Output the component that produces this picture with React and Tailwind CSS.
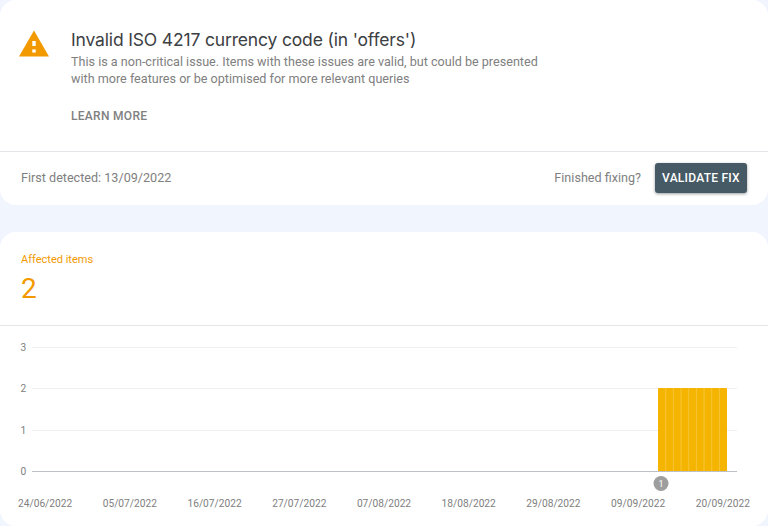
import React from "react";

const dates = ["24/06/2022", "05/07/2022", "16/07/2022", "27/07/2022", "07/08/2022", "18/08/2022", "29/08/2022", "09/09/2022", "20/09/2022"];
const gridLines = [
  { label: "3", y: 21 },
  { label: "2", y: 62 },
  { label: "1", y: 104 },
];

function WarningIcon() {
  return (
    <svg width="30" height="27" viewBox="0 0 30 27" className="shrink-0">
      <path d="M15 0.5 L30 26.5 H0 Z" fill="#f29900" />
      <rect x="13.3" y="11" width="3.4" height="5" fill="#fff" />
      <rect x="13.3" y="19.4" width="3.4" height="3.2" fill="#fff" />
    </svg>
  );
}

function Chart() {
  return (
    <svg width="768" height="168" viewBox="0 0 768 168" className="block" style={{ fontFamily: "Roboto, sans-serif" }}>
      {gridLines.map((g) => (
        <g key={g.label}>
          <text x="20.5" y={g.y + 3.5} fontSize="10.2" fill="#808080">{g.label}</text>
          <line x1="32" x2="737" y1={g.y + 0.5} y2={g.y + 0.5} stroke="#eeeff1" />
        </g>
      ))}
      <path d="M658 145 V63 a1 1 0 0 1 1 -1 H726 a1 1 0 0 1 1 1 V145 Z" fill="#f4b400" />
      {Array.from({ length: 8 }).map((_, i) => (
        <line key={i} x1={665.7 + i * 7.67} x2={665.7 + i * 7.67} y1="62" y2="145" stroke="#f8ca45" strokeWidth="0.8" />
      ))}
      <text x="20.5" y="148.5" fontSize="10.2" fill="#808080">0</text>
      <line x1="32" x2="737" y1="145.5" y2="145.5" stroke="#bdc1c6" />
      <circle cx="661" cy="157.5" r="7.5" fill="#9e9e9e" />
      <text x="661" y="160.8" fontSize="9" fill="#fff" textAnchor="middle">1</text>
    </svg>
  );
}

export default function App() {
  return (
    <div className="h-[526px] w-[768px] overflow-hidden bg-[#f1f5fd] font-['Roboto',sans-serif]">
      <section className="h-[205px] rounded-2xl bg-white">
        <div className="flex h-[152px] items-start gap-[22px] border-b border-[#e3e5e8] pl-[19px] pt-[30px]">
          <WarningIcon />
          <div>
            <h1 className="font-['Inter',sans-serif] text-[17.5px] leading-[20px] tracking-[-0.16px] text-[#3c4043]">Invalid ISO 4217 currency code (in 'offers')</h1>
            <p className="mt-[3px] w-[480px] text-[12.6px] leading-[17px] text-[#808080]">
              This is a non-critical issue. Items with these issues are valid, but could be presented with more features or be optimised for more relevant queries
            </p>
            <div className="mt-[21px] text-[12px] font-medium leading-[16px] tracking-[0.3px] text-[#808080]">LEARN MORE</div>
          </div>
        </div>
        <div className="flex h-[53px] items-center justify-between px-[21px] pb-[1px]">
          <span className="text-[12.6px] text-[#808080]">First detected: 13/09/2022</span>
          <div className="flex items-center gap-[14px]">
            <span className="text-[12.6px] text-[#808080]">Finished fixing?</span>
            <button className="h-[30px] w-[92px] rounded-[3px] bg-[#455a64] text-[12px] font-medium tracking-[0.25px] text-white shadow-[0_1px_3px_rgba(60,64,67,0.5)]">VALIDATE FIX</button>
          </div>
        </div>
      </section>

      <section className="mt-[27px] h-[294px] rounded-2xl bg-white">
        <div className="h-[94px] border-b border-[#e3e5e8] pl-[21px] pt-[21px]">
          <div className="text-[11px] leading-[13px] text-[#f29900]">Affected items</div>
          <div className="mt-[7px] text-[28px] leading-[32px] text-[#f29900]">2</div>
        </div>
        <Chart />
        <div className="flex justify-between px-[18px] pt-[4px] text-[10.2px] leading-[12px] text-[#808080]">
          {dates.map((d) => <span key={d}>{d}</span>)}
        </div>
      </section>
    </div>
  );
}
